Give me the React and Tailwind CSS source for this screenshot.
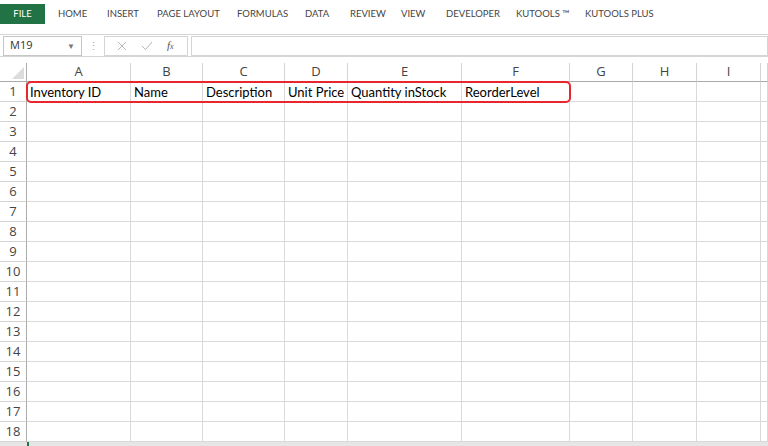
import { Fragment } from 'react'

const TABS = [
  { label: 'HOME', cls: 'w-[49px]' },
  { label: 'INSERT', cls: 'w-[50px]' },
  { label: 'PAGE LAYOUT', cls: 'w-[80px]' },
  { label: 'FORMULAS', cls: 'w-[68px]' },
  { label: 'DATA', cls: 'w-[45px]' },
  { label: 'REVIEW', cls: 'w-[51px]' },
  { label: 'VIEW', cls: 'w-[45px]' },
  { label: 'DEVELOPER', cls: 'w-[70px]' },
  { label: 'KUTOOLS ™', cls: 'w-[69px]' },
  { label: 'KUTOOLS PLUS', cls: '' },
]

const COLS = ['A', 'B', 'C', 'D', 'E', 'F', 'G', 'H', 'I', '']
const HEADERS = ['Inventory ID', 'Name', 'Description', 'Unit Price', 'Quantity inStock', 'ReorderLevel']
const ROWS = Array.from({ length: 18 }, (_, i) => i + 1)

function TabBar() {
  return (
    <div className="flex h-[35px] items-start border-b border-[#d5d5d5] bg-white pt-[4px] text-[9.5px] text-[#444]" style={{ fontFamily: 'Lato, sans-serif' }}>
      <div className="flex h-[20px] w-[45px] items-center justify-center bg-[#217346] text-white">FILE</div>
      <div className="ml-[13px] flex h-[20px] items-center">
        {TABS.map((t) => (
          <span key={t.label} className={`whitespace-nowrap ${t.cls}`}>
            {t.label}
          </span>
        ))}
      </div>
    </div>
  )
}

function FormulaBar() {
  return (
    <div className="flex h-[22px] items-center border-b border-[#d5d5d5] bg-white pl-[3px]" style={{ fontFamily: '"Open Sans", sans-serif' }}>
      <div className="flex h-[20px] w-[79px] items-center justify-between border border-[#c6c6c6] pl-[6px] pr-[6px] text-[11px] text-[#333]">
        <span>M19</span>
        <span className="text-[8px] text-[#777]">▼</span>
      </div>
      <div className="flex w-[22px] justify-center text-[11px] leading-none text-[#aaa]">⋮</div>
      <div className="flex h-[20px] w-[84px] items-center border border-[#d5d5d5] text-[#bbb]">
        <svg className="ml-[12px]" width="10" height="10" viewBox="0 0 10 10">
          <path d="M1 1L9 9M9 1L1 9" stroke="#b5b5b5" strokeWidth="1" fill="none" />
        </svg>
        <svg className="ml-[14px]" width="12" height="10" viewBox="0 0 12 10">
          <path d="M1 5L4.5 8.5L11 1" stroke="#b5b5b5" strokeWidth="1" fill="none" />
        </svg>
        <span className="ml-[14px] text-[11px] italic text-[#555]" style={{ fontFamily: '"Liberation Serif", serif' }}>
          f<span className="text-[8px]">x</span>
        </span>
      </div>
      <div className="ml-[3px] h-[20px] flex-1 border border-[#d5d5d5]" />
    </div>
  )
}

function Sheet() {
  return (
    <div className="relative">
      <div className="grid grid-cols-[27px_104px_72px_82px_63px_114px_108px_63px_64px_64px_1fr]">
        {/* column headers */}
        <div className="relative h-[19px] border-r border-b border-[#ababab] bg-white">
          <svg className="absolute bottom-[2px] right-[2px]" width="12" height="12" viewBox="0 0 12 12">
            <path d="M12 0L12 12L0 12Z" fill="#dcdcdc" />
          </svg>
        </div>
        {COLS.map((c, i) => (
          <div
            key={i}
            className="flex h-[19px] items-center justify-center border-r border-b border-[#d4d4d4] border-b-[#ababab] bg-white text-[13px] text-[#444]"
            style={{ fontFamily: '"Open Sans", sans-serif' }}
          >
            {c}
          </div>
        ))}

        {ROWS.map((r) => (
          <Fragment key={r}>
            <div
              className="flex h-[20px] items-center justify-center border-r border-b border-[#d4d4d4] border-r-[#ababab] bg-white text-[13px] text-[#444]"
              style={{ fontFamily: '"Open Sans", sans-serif' }}
            >
              {r}
            </div>
            {COLS.map((_, ci) => (
              <div
                key={ci}
                className="flex h-[20px] items-center overflow-visible whitespace-nowrap border-r border-b border-[#d9d9d9] bg-white pl-[3px] pt-[2px] text-[13px] text-black"
                style={{ fontFamily: 'Lato, sans-serif' }}
              >
                {r === 1 ? HEADERS[ci] || '' : ''}
              </div>
            ))}
          </Fragment>
        ))}
      </div>
      {/* red highlight over the header row */}
      <div className="pointer-events-none absolute left-[26px] top-[18px] h-[22px] w-[545px] rounded-[5px] border-2 border-[#e8262d]" />
      <div className="flex h-[6px] bg-[#e6e6e6]">
        <div className="ml-[27px] w-[2px] bg-[#217346]" />
      </div>
    </div>
  )
}

export default function App() {
  return (
    <div className="h-[446px] w-[768px] overflow-hidden bg-white">
      <TabBar />
      <FormulaBar />
      <div className="h-[6px] bg-white" />
      <Sheet />
    </div>
  )
}
